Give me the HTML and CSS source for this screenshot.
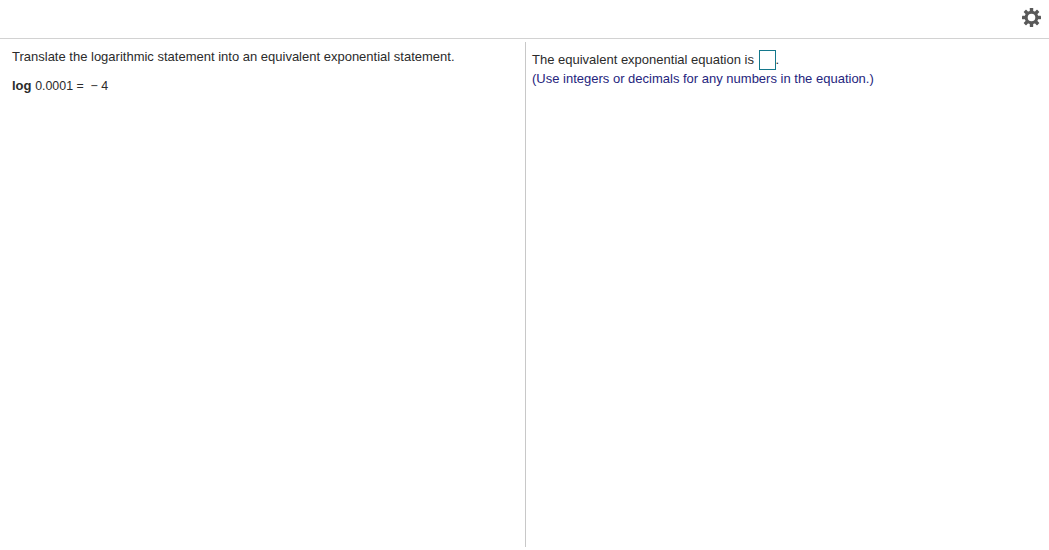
FILE: index.html
```html
<!DOCTYPE html>
<html lang="en">
<head>
    <meta charset="UTF-8">
    <title>Question</title>
    <link rel="stylesheet" href="styles.css">
</head>
<body>
    <div class="toolbar">
        <svg class="gear" viewBox="-10 -10 20 20" width="19" height="19">
            <circle r="5.6" class="gear-ring"/>
            <rect x="-1.8" y="-10" width="3.6" height="4" rx="0.4"/>
            <rect x="-1.8" y="-10" width="3.6" height="4" rx="0.4" transform="rotate(45)"/>
            <rect x="-1.8" y="-10" width="3.6" height="4" rx="0.4" transform="rotate(90)"/>
            <rect x="-1.8" y="-10" width="3.6" height="4" rx="0.4" transform="rotate(135)"/>
            <rect x="-1.8" y="-10" width="3.6" height="4" rx="0.4" transform="rotate(180)"/>
            <rect x="-1.8" y="-10" width="3.6" height="4" rx="0.4" transform="rotate(225)"/>
            <rect x="-1.8" y="-10" width="3.6" height="4" rx="0.4" transform="rotate(270)"/>
            <rect x="-1.8" y="-10" width="3.6" height="4" rx="0.4" transform="rotate(315)"/>
        </svg>
    </div>

    <div class="content">
        <div class="left-pane">
            <p class="statement">Translate the logarithmic statement into an equivalent exponential statement.</p>
            <p class="equation"><b>log</b> <span class="math">0.0001 = &nbsp;&minus; 4</span></p>
        </div>
        <div class="right-pane">
            <p class="prompt">The equivalent exponential equation is <span class="answer-box"></span>.</p>
            <p class="hint">(Use integers or decimals for any numbers in the equation.)</p>
        </div>
    </div>
</body>
</html>
```

FILE: styles.css
```css
* {
    margin: 0;
    padding: 0;
    box-sizing: border-box;
}

body {
    font-family: 'Liberation Sans', Arial, sans-serif;
    font-size: 13px;
    height: 550px;
    overflow: hidden;
    background-color: #ffffff;
    color: #2b2b2b;
}

.toolbar {
    height: 39px;
    display: flex;
    justify-content: flex-end;
    align-items: flex-start;
    padding: 8px 8px 0 0;
    border-bottom: 1px solid #d2d2d2;
}

.gear {
    fill: #595959;
}

.gear-ring {
    fill: none;
    stroke: #595959;
    stroke-width: 3.2;
}

.content {
    display: flex;
    height: 505px;
    margin-top: 3px;
}

.left-pane {
    width: 526px;
    padding: 7px 12px 0 12px;
    border-right: 1px solid #c8c8c8;
}

.statement {
    line-height: 16px;
}

.equation {
    margin-top: 13px;
    line-height: 16px;
}

.equation b {
    font-weight: bold;
}

.math {
    font-size: 12.4px;
}

.right-pane {
    padding: 6px 0 0 6px;
}

.prompt {
    height: 22px;
    display: flex;
    align-items: center;
    white-space: pre;
}

.answer-box {
    display: block;
    width: 17px;
    height: 20px;
    margin: 2px 0 0 1px;
    border: 1px solid #14788c;
}

.hint {
    margin-top: 1px;
    color: #25257d;
    line-height: 16px;
}
```
